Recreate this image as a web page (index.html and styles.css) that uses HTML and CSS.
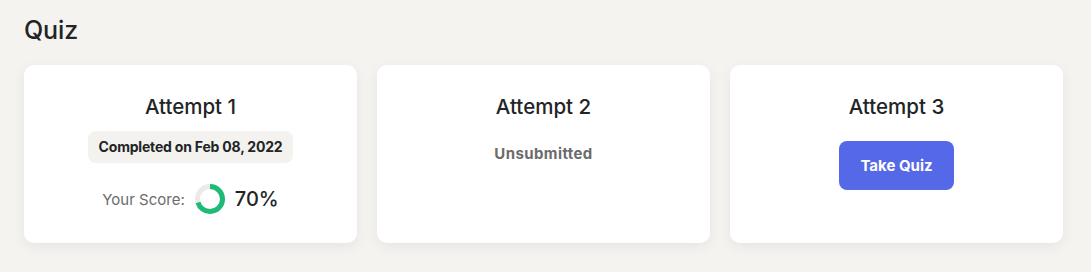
FILE: index.html
```html
<!DOCTYPE html>
<html lang="en">
<head>
    <meta charset="UTF-8">
    <meta name="viewport" content="width=device-width, initial-scale=1.0">
    <title>Quiz</title>
    <link rel="stylesheet" href="styles.css">
</head>
<body>
    <div class="page">
        <h1 class="page-title">Quiz</h1>
        <div class="attempts">
            <div class="attempt-card">
                <h2 class="attempt-title">Attempt 1</h2>
                <div class="completed-badge">Completed on Feb 08, 2022</div>
                <div class="score-row">
                    <span class="score-label">Your Score:</span>
                    <svg class="score-ring" width="30" height="30" viewBox="0 0 30 30">
                        <circle cx="15" cy="15" r="12.5" fill="none" stroke="#ebeae6" stroke-width="5"/>
                        <circle cx="15" cy="15" r="12.5" fill="none" stroke="#1dbb78" stroke-width="5"
                                stroke-dasharray="54.98 78.54" transform="rotate(-90 15 15)"/>
                    </svg>
                    <span class="score-value">70%</span>
                </div>
            </div>
            <div class="attempt-card">
                <h2 class="attempt-title">Attempt 2</h2>
                <div class="unsubmitted">Unsubmitted</div>
            </div>
            <div class="attempt-card">
                <h2 class="attempt-title">Attempt 3</h2>
                <button class="take-quiz">Take Quiz</button>
            </div>
        </div>
    </div>
</body>
</html>
```

FILE: styles.css
```css
* {
    box-sizing: border-box;
}
body {
    margin: 0;
    background-color: #f4f3f0;
    font-family: Inter, "Noto Sans", sans-serif;
    color: #222426;
}
.page {
    padding: 14px 28px 24px 24px;
}
.page-title {
    font-size: 25px;
    font-weight: 500;
    line-height: 32px;
    margin: 0 0 19px 0;
    letter-spacing: -0.1px;
}
.attempts {
    display: grid;
    grid-template-columns: repeat(3, 1fr);
    gap: 20px;
}
.attempt-card {
    background-color: #ffffff;
    border-radius: 10px;
    height: 178px;
    padding-top: 29px;
    display: flex;
    flex-direction: column;
    align-items: center;
    box-shadow: 0 4px 14px rgba(0, 0, 0, 0.06);
}
.attempt-title {
    font-size: 20.5px;
    font-weight: 500;
    line-height: 26px;
    margin: 0;
}
.completed-badge {
    margin-top: 11px;
    background-color: #f3f2ef;
    border-radius: 8px;
    height: 32px;
    line-height: 32px;
    padding: 0 11px;
    font-size: 14px;
    font-weight: 700;
    letter-spacing: -0.2px;
}
.score-row {
    margin-top: 21px;
    display: flex;
    align-items: center;
}
.score-label {
    font-size: 15px;
    color: #6b6b6b;
    margin-right: 10px;
}
.score-ring {
    display: block;
    margin-right: 10px;
}
.score-value {
    font-size: 20px;
    font-weight: 500;
}
.unsubmitted {
    margin-top: 24px;
    font-size: 15px;
    font-weight: 700;
    line-height: 20px;
    letter-spacing: 0.4px;
    color: #6b6b6b;
}
.take-quiz {
    margin-top: 21px;
    width: 115px;
    height: 49px;
    border: none;
    border-radius: 8px;
    background-color: #5468e8;
    color: #ffffff;
    font-family: inherit;
    font-size: 15px;
    font-weight: 700;
    cursor: pointer;
}
```
